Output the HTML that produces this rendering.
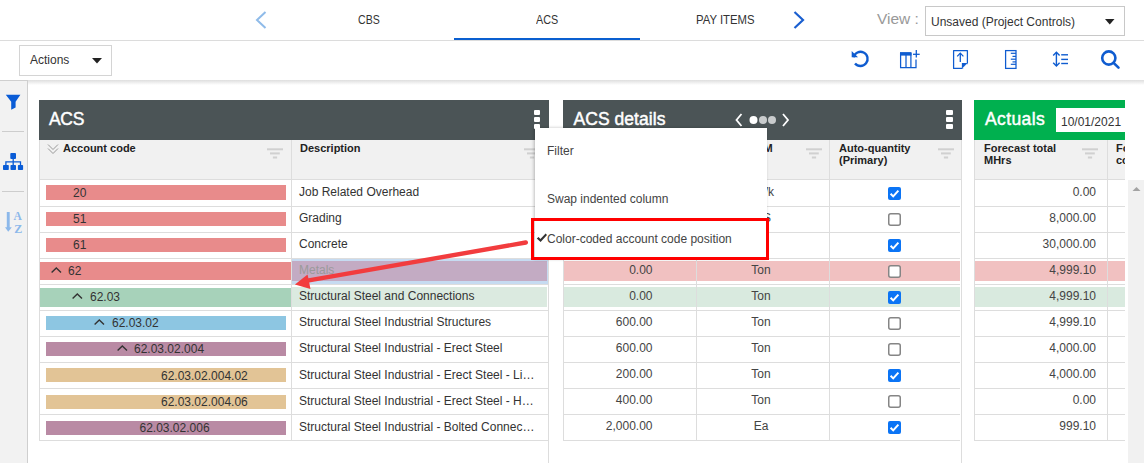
<!DOCTYPE html>
<html><head><meta charset="utf-8">
<style>
*{box-sizing:border-box;margin:0;padding:0}
html,body{width:1144px;height:463px;overflow:hidden;background:#fff;font-family:"Liberation Sans",sans-serif;color:#333;position:relative}
.a{position:absolute}
.t{position:absolute;white-space:nowrap;line-height:1}
svg{position:absolute;overflow:visible}
</style></head><body>

<!-- top tab bar -->
<div class="a" style="left:0;top:40px;width:1144px;height:1px;background:#dcdcdc"></div>
<svg style="left:255px;top:11px" width="12" height="18"><polyline points="10.5,1 2,9 10.5,17" fill="none" stroke="#8fbbe9" stroke-width="2"/></svg>
<div class="t" style="left:358.3px;top:14px;font-size:12px;color:#333;transform:scaleX(0.88);transform-origin:0 0">CBS</div>
<div class="t" style="left:536px;top:14px;font-size:12px;color:#333;transform:scaleX(0.9);transform-origin:0 0">ACS</div>
<div class="a" style="left:454px;top:38px;width:186px;height:2px;background:#0a5fd0"></div>
<div class="t" style="left:695.5px;top:14px;font-size:12px;color:#333;transform:scaleX(0.945);transform-origin:0 0">PAY ITEMS</div>
<svg style="left:793px;top:11px" width="12" height="18"><polyline points="1.5,1 10,9 1.5,17" fill="none" stroke="#1a5fd0" stroke-width="2.2"/></svg>
<div class="t" style="left:877px;top:11px;font-size:15.5px;color:#999">View :</div>
<div class="a" style="left:925px;top:6px;width:200px;height:30px;border:1px solid #c8c8c8;background:#fff"></div>
<div class="t" style="left:931px;top:16px;font-size:12px;color:#333">Unsaved (Project Controls)</div>
<svg style="left:1105px;top:19px" width="10" height="6"><polygon points="0,0 9.5,0 4.75,5.5" fill="#222"/></svg>

<!-- toolbar -->
<div class="a" style="left:0;top:80px;width:1144px;height:5px;background:linear-gradient(#dedede,#fff)"></div>
<div class="a" style="left:19px;top:45px;width:93px;height:31px;border:1px solid #d4d4d4;background:#fff"></div>
<div class="t" style="left:30px;top:54px;font-size:12px;color:#333">Actions</div>
<svg style="left:92px;top:57.5px" width="10" height="6"><polygon points="0,0 10,0 5,5.5" fill="#222"/></svg>


<!-- toolbar icons -->
<svg style="left:850px;top:48px" width="20" height="20" viewBox="0 0 20 20">
 <path d="M3.6 9.2 A7.1 7.1 0 1 1 5 15.4" fill="none" stroke="#0f5cd0" stroke-width="2.4"/>
 <polygon points="1.7,2.9 8,9.2 1.7,9.2" fill="#0f5cd0"/>
</svg>
<svg style="left:898px;top:48px" width="24" height="22" viewBox="0 0 24 22">
 <path d="M2.6 5 V19.5 H18 V11.5 M8 5 V19.5 M12.9 5 V19.5" fill="none" stroke="#0f5cd0" stroke-width="1.25"/>
 <rect x="2" y="4.1" width="11.5" height="3.5" fill="#0f5cd0"/>
 <line x1="18.3" y1="2.1" x2="18.3" y2="9.6" stroke="#0f5cd0" stroke-width="1.3"/>
 <line x1="15" y1="6.3" x2="21.7" y2="6.3" stroke="#0f5cd0" stroke-width="1.3"/>
</svg>
<svg style="left:952px;top:49px" width="18" height="21" viewBox="0 0 18 21">
 <path d="M1.6 1.6 H15.4 V14.6 L10.5 19.4 H1.6 Z" fill="none" stroke="#0f5cd0" stroke-width="1.25" stroke-linejoin="round"/>
 <polygon points="10,19.4 15.5,14 15.5,19.5" fill="#fff"/>
 <polygon points="9.9,19.5 9.9,14 15.5,14" fill="#0f5cd0"/>
 <line x1="8.3" y1="4.3" x2="8.3" y2="12.9" stroke="#0f5cd0" stroke-width="1.3"/>
 <polyline points="5.2,7.4 8.3,4.1 11.4,7.4" fill="none" stroke="#0f5cd0" stroke-width="1.3"/>
</svg>
<svg style="left:1004px;top:49px" width="14" height="21" viewBox="0 0 14 21">
 <rect x="1.6" y="1.6" width="10.4" height="17.8" fill="none" stroke="#0f5cd0" stroke-width="1.25"/>
 <line x1="6.8" y1="4.3" x2="12" y2="4.3" stroke="#0f5cd0" stroke-width="1.2"/>
 <line x1="8.5" y1="7.4" x2="12" y2="7.4" stroke="#0f5cd0" stroke-width="1.2"/>
 <line x1="6.8" y1="10.2" x2="12" y2="10.2" stroke="#0f5cd0" stroke-width="1.2"/>
 <line x1="8.5" y1="12.9" x2="12" y2="12.9" stroke="#0f5cd0" stroke-width="1.2"/>
 <line x1="6.8" y1="15.3" x2="12" y2="15.3" stroke="#0f5cd0" stroke-width="1.2"/>
</svg>
<svg style="left:1051px;top:50px" width="20" height="18" viewBox="0 0 20 18">
 <line x1="5.4" y1="2.5" x2="5.4" y2="15.8" stroke="#0f5cd0" stroke-width="1.4"/>
 <polyline points="2.2,5.4 5.4,2.2 8.6,5.4" fill="none" stroke="#0f5cd0" stroke-width="1.4"/>
 <polyline points="2.2,12.8 5.4,16 8.6,12.8" fill="none" stroke="#0f5cd0" stroke-width="1.4"/>
 <line x1="10.2" y1="4.8" x2="17" y2="4.8" stroke="#0f5cd0" stroke-width="1.4"/>
 <line x1="10.2" y1="9.4" x2="17" y2="9.4" stroke="#0f5cd0" stroke-width="1.4"/>
 <line x1="10.2" y1="13.5" x2="17" y2="13.5" stroke="#0f5cd0" stroke-width="1.4"/>
</svg>
<svg style="left:1099px;top:48px" width="22" height="22" viewBox="0 0 22 22">
 <circle cx="9.8" cy="10" r="6.6" fill="none" stroke="#0f5cd0" stroke-width="2.6"/>
 <line x1="14.6" y1="14.8" x2="19.5" y2="19.7" stroke="#0f5cd0" stroke-width="2.6" stroke-linecap="round"/>
</svg>

<!-- sidebar -->
<div class="a" style="left:0;top:80px;width:27px;height:383px;background:#f2f2f2;border-top:1px solid #cfcfcf"></div>
<div class="a" style="left:27px;top:80px;width:1px;height:383px;background:#cfcfcf"></div>
<svg style="left:5px;top:94px" width="16" height="16" viewBox="0 0 16 16">
 <polygon points="0.8,0.8 15.4,0.8 10.6,7.8 10.6,13.4 6.2,15.8 6.2,7.8" fill="#0a5cd6"/>
</svg>
<div class="a" style="left:2px;top:131px;width:22px;height:1px;background:#cdcdcd"></div>
<svg style="left:3px;top:152px" width="21" height="19" viewBox="0 0 21 19">
 <rect x="7.3" y="1.1" width="5.7" height="5.8" rx="0.9" fill="#0a5cd6"/>
 <rect x="0" y="12.9" width="5.8" height="5.2" rx="0.8" fill="#0a5cd6"/>
 <rect x="7.5" y="12.9" width="5.5" height="5.2" rx="0.8" fill="#0a5cd6"/>
 <rect x="14.9" y="12.9" width="5.2" height="5.2" rx="0.8" fill="#0a5cd6"/>
 <path d="M10.2 6.5 V13 M2.9 13 V9.9 H17.5 V13" fill="none" stroke="#0a5cd6" stroke-width="1.3"/>
</svg>
<div class="a" style="left:2px;top:191px;width:22px;height:1px;background:#cdcdcd"></div>
<svg style="left:4px;top:211px" width="9" height="22" viewBox="0 0 9 22">
 <rect x="2.8" y="1" width="2.9" height="16.5" fill="#8cb8ea"/>
 <polygon points="1,16.3 7.8,16.3 4.25,20.8" fill="#8cb8ea"/>
</svg>
<div class="t" style="left:13.4px;top:211.2px;font-size:11.5px;font-weight:bold;color:#8cb8ea;font-family:'Liberation Serif',serif">A</div>
<div class="t" style="left:14.2px;top:222.6px;font-size:12px;font-weight:bold;color:#8cb8ea;font-family:'Liberation Serif',serif">Z</div>

<!-- PANELS -->
<div class="a" style="left:39px;top:100px;width:510px;height:40px;background:#4b5456"></div>
<div class="t" style="left:49px;top:111px;font-size:17.5px;color:#fff;-webkit-text-stroke:0.45px #fff;letter-spacing:-0.3px">ACS</div>
<div class="a" style="left:39px;top:140px;width:509px;height:39px;background:#f1f1f1"></div>
<div class="a" style="left:39px;top:179px;width:509px;height:1px;background:#dddddd"></div>
<div class="a" style="left:39px;top:140px;width:1px;height:301px;background:#dddddd"></div>
<div class="a" style="left:291px;top:140px;width:1px;height:301px;background:#dddddd"></div>
<div class="a" style="left:548px;top:140px;width:1px;height:323px;background:#dddddd"></div>
<svg style="left:47px;top:143px" width="13" height="12" viewBox="0 0 13 12"><polyline points="1,1.5 6,6.5 11,1.5" fill="none" stroke="#999" stroke-width="1"/><polyline points="1,5.5 6,10.5 11,5.5" fill="none" stroke="#999" stroke-width="1"/></svg>
<div class="t" style="left:63px;top:143px;font-size:11px;font-weight:bold;color:#222">Account code</div>
<svg style="left:267px;top:147.5px" width="17" height="12" viewBox="0 0 17 12"><rect x="0" y="0.3" width="16" height="2" fill="#d0d0d0"/><rect x="3" y="4.4" width="9.8" height="2" fill="#d0d0d0"/><rect x="5.9" y="8.5" width="4.2" height="2" fill="#d0d0d0"/></svg>
<div class="t" style="left:300px;top:143px;font-size:11px;font-weight:bold;color:#222">Description</div>
<svg style="left:524px;top:147.5px" width="17" height="12" viewBox="0 0 17 12"><rect x="0" y="0.3" width="16" height="2" fill="#d0d0d0"/><rect x="3" y="4.4" width="9.8" height="2" fill="#d0d0d0"/><rect x="5.9" y="8.5" width="4.2" height="2" fill="#d0d0d0"/></svg>
<div class="a" style="left:40px;top:206px;width:508px;height:1px;background:#dddddd"></div>
<div class="a" style="left:40px;top:232px;width:508px;height:1px;background:#dddddd"></div>
<div class="a" style="left:40px;top:258px;width:508px;height:1px;background:#dddddd"></div>
<div class="a" style="left:40px;top:284px;width:508px;height:1px;background:#dddddd"></div>
<div class="a" style="left:40px;top:310px;width:508px;height:1px;background:#dddddd"></div>
<div class="a" style="left:40px;top:336px;width:508px;height:1px;background:#dddddd"></div>
<div class="a" style="left:40px;top:362px;width:508px;height:1px;background:#dddddd"></div>
<div class="a" style="left:40px;top:388px;width:508px;height:1px;background:#dddddd"></div>
<div class="a" style="left:40px;top:414px;width:508px;height:1px;background:#dddddd"></div>
<div class="a" style="left:40px;top:440px;width:508px;height:1px;background:#dddddd"></div>
<div class="a" style="left:46px;top:185px;width:240px;height:15px;background:#e88b8b"></div>
<div class="t" style="left:73px;top:187px;font-size:12px;color:#333">20</div>
<div class="t" style="left:299px;top:186px;font-size:12px;color:#333">Job Related Overhead</div>
<div class="a" style="left:46px;top:212px;width:240px;height:14px;background:#e88b8b"></div>
<div class="t" style="left:73px;top:213px;font-size:12px;color:#333">51</div>
<div class="t" style="left:299px;top:212px;font-size:12px;color:#333">Grading</div>
<div class="a" style="left:46px;top:238px;width:240px;height:14px;background:#e88b8b"></div>
<div class="t" style="left:73px;top:239px;font-size:12px;color:#333">61</div>
<div class="t" style="left:299px;top:238px;font-size:12px;color:#333">Concrete</div>
<div class="a" style="left:40px;top:261.6px;width:251px;height:18.4px;background:#e88b8b"></div>
<div class="a" style="left:292px;top:259px;width:256px;height:25px;background:#c6dbf1"></div>
<div class="a" style="left:292px;top:261px;width:255px;height:20px;background:#c3abc3"></div>
<svg style="left:50.5px;top:267.2px" width="11" height="7" viewBox="0 0 11 7"><polyline points="0.6,5.6 5.3,0.9 10,5.6" fill="none" stroke="#333" stroke-width="1.4"/></svg>
<div class="t" style="left:68px;top:265px;font-size:12px;color:#333">62</div>
<div class="t" style="left:299px;top:264px;font-size:12px;color:#9a9a9a">Metals</div>
<div class="a" style="left:40px;top:288px;width:251px;height:18.5px;background:#a7d2ba"></div>
<div class="a" style="left:292px;top:287px;width:255px;height:20px;background:#dbeae0"></div>
<svg style="left:72.3px;top:293.2px" width="11" height="7" viewBox="0 0 11 7"><polyline points="0.6,5.6 5.3,0.9 10,5.6" fill="none" stroke="#333" stroke-width="1.4"/></svg>
<div class="t" style="left:90px;top:291px;font-size:12px;color:#333">62.03</div>
<div class="t" style="left:299px;top:290px;font-size:12px;color:#333">Structural Steel and Connections</div>
<div class="a" style="left:46px;top:316px;width:240px;height:14px;background:#8dc6e2"></div>
<svg style="left:94.3px;top:319.2px" width="11" height="7" viewBox="0 0 11 7"><polyline points="0.6,5.6 5.3,0.9 10,5.6" fill="none" stroke="#333" stroke-width="1.4"/></svg>
<div class="t" style="left:112px;top:317px;font-size:12px;color:#333">62.03.02</div>
<div class="t" style="left:299px;top:316px;font-size:12px;color:#333">Structural Steel Industrial Structures</div>
<div class="a" style="left:46px;top:342px;width:240px;height:14px;background:#b98aa4"></div>
<svg style="left:116.5px;top:345.2px" width="11" height="7" viewBox="0 0 11 7"><polyline points="0.6,5.6 5.3,0.9 10,5.6" fill="none" stroke="#333" stroke-width="1.4"/></svg>
<div class="t" style="left:134px;top:343px;font-size:12px;color:#333">62.03.02.004</div>
<div class="t" style="left:299px;top:342px;font-size:12px;color:#333">Structural Steel Industrial - Erect Steel</div>
<div class="a" style="left:46px;top:368px;width:240px;height:14px;background:#e2c496"></div>
<div class="t" style="left:161px;top:369.6px;font-size:12px;color:#333">62.03.02.004.02</div>
<div class="t" style="left:299px;top:368.6px;font-size:12px;color:#333">Structural Steel Industrial - Erect Steel - Li…</div>
<div class="a" style="left:46px;top:395px;width:240px;height:14px;background:#e2c496"></div>
<div class="t" style="left:161px;top:395.6px;font-size:12px;color:#333">62.03.02.004.06</div>
<div class="t" style="left:299px;top:394.6px;font-size:12px;color:#333">Structural Steel Industrial - Erect Steel - H…</div>
<div class="a" style="left:46px;top:421px;width:240px;height:14px;background:#b98aa4"></div>
<div class="t" style="left:139.5px;top:421.6px;font-size:12px;color:#333">62.03.02.006</div>
<div class="t" style="left:299px;top:420.6px;font-size:12px;color:#333">Structural Steel Industrial - Bolted Connec…</div>
<div class="a" style="left:563px;top:100px;width:399px;height:40px;background:#4b5456"></div>
<div class="t" style="left:573.5px;top:111px;font-size:17.5px;color:#fff;-webkit-text-stroke:0.45px #fff;letter-spacing:0.05px">ACS details</div>
<svg style="left:734px;top:112px" width="60" height="16" viewBox="0 0 60 16"><polyline points="7.5,2 2.5,8 7.5,14" fill="none" stroke="#fff" stroke-width="1.8"/><circle cx="19.5" cy="8" r="4" fill="#fff"/><circle cx="29" cy="8" r="4" fill="#c9cccd"/><circle cx="38" cy="8" r="4" fill="#c9cccd"/><polyline points="49,2 54,8 49,14" fill="none" stroke="#fff" stroke-width="1.8"/></svg>
<div class="a" style="left:946.4px;top:110px;width:6.6px;height:5.4px;background:#fff;border-radius:1px"></div>
<div class="a" style="left:946.4px;top:116.8px;width:6.6px;height:5.4px;background:#fff;border-radius:1px"></div>
<div class="a" style="left:946.4px;top:123.5px;width:6.6px;height:5.4px;background:#fff;border-radius:1px"></div>
<div class="a" style="left:563px;top:140px;width:399px;height:39px;background:#f1f1f1"></div>
<div class="a" style="left:563px;top:179px;width:399px;height:1px;background:#dddddd"></div>
<div class="a" style="left:563px;top:140px;width:1px;height:301px;background:#dddddd"></div>
<div class="a" style="left:696px;top:140px;width:1px;height:301px;background:#dddddd"></div>
<div class="a" style="left:829px;top:140px;width:1px;height:301px;background:#dddddd"></div>
<div class="a" style="left:961px;top:140px;width:1px;height:323px;background:#dddddd"></div>
<div class="t" style="left:703px;top:143px;font-size:11px;font-weight:bold;color:#222">Primary UOM</div>
<svg style="left:806px;top:147.5px" width="17" height="12" viewBox="0 0 17 12"><rect x="0" y="0.3" width="16" height="2" fill="#d0d0d0"/><rect x="3" y="4.4" width="9.8" height="2" fill="#d0d0d0"/><rect x="5.9" y="8.5" width="4.2" height="2" fill="#d0d0d0"/></svg>
<div class="t" style="left:839px;top:143px;font-size:11px;font-weight:bold;color:#222;line-height:11.5px">Auto-quantity<br>(Primary)</div>
<svg style="left:938px;top:147.5px" width="17" height="12" viewBox="0 0 17 12"><rect x="0" y="0.3" width="16" height="2" fill="#d0d0d0"/><rect x="3" y="4.4" width="9.8" height="2" fill="#d0d0d0"/><rect x="5.9" y="8.5" width="4.2" height="2" fill="#d0d0d0"/></svg>
<div class="a" style="left:564px;top:206px;width:396px;height:1px;background:#dddddd"></div>
<div class="a" style="left:564px;top:232px;width:396px;height:1px;background:#dddddd"></div>
<div class="a" style="left:564px;top:258px;width:396px;height:1px;background:#dddddd"></div>
<div class="a" style="left:564px;top:284px;width:396px;height:1px;background:#dddddd"></div>
<div class="a" style="left:564px;top:310px;width:396px;height:1px;background:#dddddd"></div>
<div class="a" style="left:564px;top:336px;width:396px;height:1px;background:#dddddd"></div>
<div class="a" style="left:564px;top:362px;width:396px;height:1px;background:#dddddd"></div>
<div class="a" style="left:564px;top:388px;width:396px;height:1px;background:#dddddd"></div>
<div class="a" style="left:564px;top:414px;width:396px;height:1px;background:#dddddd"></div>
<div class="a" style="left:564px;top:440px;width:396px;height:1px;background:#dddddd"></div>
<div class="t" style="right:491.5px;top:186px;font-size:12px;color:#444">0.00</div>
<div class="t" style="right:370px;top:186px;font-size:12px;color:#444">Wk</div>
<svg style="left:887.7px;top:187px" width="13" height="13" viewBox="0 0 13 13"><rect x="0" y="0" width="13" height="13" rx="2" fill="#0b74f5"/><polyline points="2.6,6.8 5.2,9.4 10.4,3.6" fill="none" stroke="#fff" stroke-width="2"/></svg>
<div class="t" style="right:491.5px;top:212px;font-size:12px;color:#444">0.00</div>
<div class="t" style="right:373px;top:212px;font-size:12px;color:#444">LS</div>
<svg style="left:887.7px;top:213px" width="13" height="13" viewBox="0 0 13 13"><rect x="0.75" y="0.75" width="11.5" height="11.5" rx="2" fill="#fff" stroke="#858585" stroke-width="1.5"/></svg>
<div class="t" style="right:491.5px;top:238px;font-size:12px;color:#444">0.00</div>
<div class="t" style="left:661px;width:200px;text-align:center;top:238px;font-size:12px;color:#444"></div>
<svg style="left:887.7px;top:239px" width="13" height="13" viewBox="0 0 13 13"><rect x="0" y="0" width="13" height="13" rx="2" fill="#0b74f5"/><polyline points="2.6,6.8 5.2,9.4 10.4,3.6" fill="none" stroke="#fff" stroke-width="2"/></svg>
<div class="a" style="left:564px;top:261px;width:396px;height:20px;background:#f1c1c1"></div>
<div class="t" style="right:491.5px;top:264px;font-size:12px;color:#444">0.00</div>
<div class="t" style="left:661px;width:200px;text-align:center;top:264px;font-size:12px;color:#444">Ton</div>
<svg style="left:887.7px;top:265px" width="13" height="13" viewBox="0 0 13 13"><rect x="0.75" y="0.75" width="11.5" height="11.5" rx="2" fill="#fff" stroke="#858585" stroke-width="1.5"/></svg>
<div class="a" style="left:564px;top:287px;width:396px;height:20px;background:#d9eadf"></div>
<div class="t" style="right:491.5px;top:290px;font-size:12px;color:#444">0.00</div>
<div class="t" style="left:661px;width:200px;text-align:center;top:290px;font-size:12px;color:#444">Ton</div>
<svg style="left:887.7px;top:291px" width="13" height="13" viewBox="0 0 13 13"><rect x="0" y="0" width="13" height="13" rx="2" fill="#0b74f5"/><polyline points="2.6,6.8 5.2,9.4 10.4,3.6" fill="none" stroke="#fff" stroke-width="2"/></svg>
<div class="t" style="right:491.5px;top:316px;font-size:12px;color:#444">600.00</div>
<div class="t" style="left:661px;width:200px;text-align:center;top:316px;font-size:12px;color:#444">Ton</div>
<svg style="left:887.7px;top:317px" width="13" height="13" viewBox="0 0 13 13"><rect x="0.75" y="0.75" width="11.5" height="11.5" rx="2" fill="#fff" stroke="#858585" stroke-width="1.5"/></svg>
<div class="t" style="right:491.5px;top:342px;font-size:12px;color:#444">600.00</div>
<div class="t" style="left:661px;width:200px;text-align:center;top:342px;font-size:12px;color:#444">Ton</div>
<svg style="left:887.7px;top:343px" width="13" height="13" viewBox="0 0 13 13"><rect x="0.75" y="0.75" width="11.5" height="11.5" rx="2" fill="#fff" stroke="#858585" stroke-width="1.5"/></svg>
<div class="t" style="right:491.5px;top:368px;font-size:12px;color:#444">200.00</div>
<div class="t" style="left:661px;width:200px;text-align:center;top:368px;font-size:12px;color:#444">Ton</div>
<svg style="left:887.7px;top:369px" width="13" height="13" viewBox="0 0 13 13"><rect x="0" y="0" width="13" height="13" rx="2" fill="#0b74f5"/><polyline points="2.6,6.8 5.2,9.4 10.4,3.6" fill="none" stroke="#fff" stroke-width="2"/></svg>
<div class="t" style="right:491.5px;top:394px;font-size:12px;color:#444">400.00</div>
<div class="t" style="left:661px;width:200px;text-align:center;top:394px;font-size:12px;color:#444">Ton</div>
<svg style="left:887.7px;top:395px" width="13" height="13" viewBox="0 0 13 13"><rect x="0.75" y="0.75" width="11.5" height="11.5" rx="2" fill="#fff" stroke="#858585" stroke-width="1.5"/></svg>
<div class="t" style="right:491.5px;top:420px;font-size:12px;color:#444">2,000.00</div>
<div class="t" style="left:661px;width:200px;text-align:center;top:420px;font-size:12px;color:#444">Ea</div>
<svg style="left:887.7px;top:421px" width="13" height="13" viewBox="0 0 13 13"><rect x="0" y="0" width="13" height="13" rx="2" fill="#0b74f5"/><polyline points="2.6,6.8 5.2,9.4 10.4,3.6" fill="none" stroke="#fff" stroke-width="2"/></svg>
<div class="a" style="left:696px;top:259px;width:1px;height:50px;background:#dddddd"></div>
<div class="a" style="left:829px;top:259px;width:1px;height:50px;background:#dddddd"></div>
<div class="a" style="left:974px;top:100px;width:151px;height:40px;background:#00b04f"></div>
<div class="t" style="left:985px;top:111px;font-size:17.5px;color:#fff;-webkit-text-stroke:0.45px #fff;letter-spacing:0.4px">Actuals</div>
<div class="a" style="left:1056px;top:108px;width:69px;height:24px;background:#fff"></div>
<div class="t" style="left:1061px;top:116px;font-size:12px;color:#333">10/01/2021</div>
<div class="a" style="left:974px;top:140px;width:151px;height:39px;background:#f1f1f1"></div>
<div class="a" style="left:974px;top:179px;width:151px;height:1px;background:#dddddd"></div>
<div class="a" style="left:974px;top:140px;width:1px;height:301px;background:#dddddd"></div>
<div class="a" style="left:1107px;top:140px;width:1px;height:301px;background:#dddddd"></div>
<div class="t" style="left:984px;top:143px;font-size:11px;font-weight:bold;color:#222;line-height:11.5px">Forecast total<br>MHrs</div>
<svg style="left:1082px;top:147.5px" width="17" height="12" viewBox="0 0 17 12"><rect x="0" y="0.3" width="16" height="2" fill="#d0d0d0"/><rect x="3" y="4.4" width="9.8" height="2" fill="#d0d0d0"/><rect x="5.9" y="8.5" width="4.2" height="2" fill="#d0d0d0"/></svg>
<div class="a" style="left:1116px;top:140px;width:9px;height:40px;overflow:hidden"><div class="t" style="left:0;top:3px;font-size:11px;font-weight:bold;color:#222;line-height:11.5px">Fo<br>co</div></div>
<div class="a" style="left:975px;top:206px;width:150px;height:1px;background:#dddddd"></div>
<div class="a" style="left:975px;top:232px;width:150px;height:1px;background:#dddddd"></div>
<div class="a" style="left:975px;top:258px;width:150px;height:1px;background:#dddddd"></div>
<div class="a" style="left:975px;top:284px;width:150px;height:1px;background:#dddddd"></div>
<div class="a" style="left:975px;top:310px;width:150px;height:1px;background:#dddddd"></div>
<div class="a" style="left:975px;top:336px;width:150px;height:1px;background:#dddddd"></div>
<div class="a" style="left:975px;top:362px;width:150px;height:1px;background:#dddddd"></div>
<div class="a" style="left:975px;top:388px;width:150px;height:1px;background:#dddddd"></div>
<div class="a" style="left:975px;top:414px;width:150px;height:1px;background:#dddddd"></div>
<div class="a" style="left:975px;top:440px;width:150px;height:1px;background:#dddddd"></div>
<div class="t" style="right:48px;top:186px;font-size:12px;color:#444">0.00</div>
<div class="t" style="right:48px;top:212px;font-size:12px;color:#444">8,000.00</div>
<div class="t" style="right:48px;top:238px;font-size:12px;color:#444">30,000.00</div>
<div class="a" style="left:975px;top:261px;width:150px;height:20px;background:#f1c1c1"></div>
<div class="t" style="right:48px;top:264px;font-size:12px;color:#444">4,999.10</div>
<div class="a" style="left:975px;top:287px;width:150px;height:20px;background:#d9eadf"></div>
<div class="t" style="right:48px;top:290px;font-size:12px;color:#444">4,999.10</div>
<div class="t" style="right:48px;top:316px;font-size:12px;color:#444">4,999.10</div>
<div class="t" style="right:48px;top:342px;font-size:12px;color:#444">4,000.00</div>
<div class="t" style="right:48px;top:368px;font-size:12px;color:#444">4,000.00</div>
<div class="t" style="right:48px;top:394px;font-size:12px;color:#444">0.00</div>
<div class="t" style="right:48px;top:420px;font-size:12px;color:#444">999.10</div>
<div class="a" style="left:1107px;top:259px;width:1px;height:50px;background:#dddddd"></div>
<div class="a" style="left:1128px;top:180px;width:16px;height:283px;background:#f1f1f1"></div>
<svg style="left:1132px;top:186px" width="9" height="6" viewBox="0 0 9 6"><polygon points="0.5,5 4.5,1 8.5,5" fill="#a3a3a3"/></svg>
<div class="a" style="left:535px;top:128px;width:232px;height:131px;background:#fff;box-shadow:-1px 0 3px rgba(0,0,0,0.25)"></div>
<div class="a" style="left:533.6px;top:110px;width:6.6px;height:5.4px;background:#fff;border-radius:1px"></div>
<div class="a" style="left:533.6px;top:116.8px;width:6.6px;height:5.4px;background:#fff;border-radius:1px"></div>
<div class="a" style="left:533.6px;top:123.5px;width:6.6px;height:5.4px;background:#fff;border-radius:1px"></div>
<div class="a" style="left:535px;top:128px;width:232px;height:131px;background:#fff"></div>
<div class="t" style="left:547px;top:145px;font-size:12px;color:#444">Filter</div>
<div class="t" style="left:547px;top:193px;font-size:12px;color:#444">Swap indented column</div>
<div class="t" style="left:547px;top:233px;font-size:12px;color:#444">Color-coded account code position</div>
<svg style="left:536px;top:233px" width="12" height="10" viewBox="0 0 12 10"><path d="M0.8 5.6 L2.6 3.9 L4.4 5.9 L9.6 0.6 L11 2 L4.6 9 Z" fill="#333"/></svg>
<div class="a" style="left:531px;top:218px;width:238px;height:41.5px;border:3px solid #f00"></div>
<svg style="left:0;top:0" width="1144" height="463"><line x1="525.8" y1="242.5" x2="306" y2="280.9" stroke="#f23c3e" stroke-width="4.4" stroke-linecap="round"/><polygon points="294.9,284.4 307.6,274.6 310.5,288.9" fill="#f23c3e"/></svg>
</body></html>
